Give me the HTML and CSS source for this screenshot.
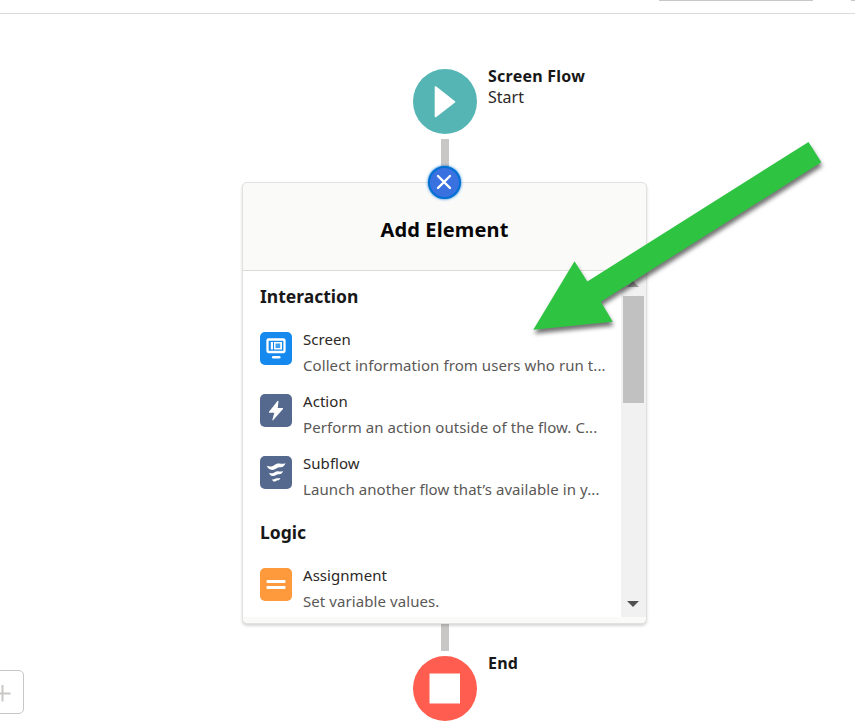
FILE: index.html
```html
<!DOCTYPE html>
<html lang="en">
<head>
  <meta charset="UTF-8">
  <title>Flow Builder</title>
  <link rel="stylesheet" href="styles.css">
</head>
<body>
<!-- Toolbar edge -->
<header class="toolbar">
  <span class="toolbar-button"></span>
  <span class="toolbar-button toolbar-button-last"></span>
</header>

<!-- Flow canvas -->
<main class="canvas">
  <div class="flow">
    <div class="node">
      <svg class="node-icon" viewBox="0 0 64 65">
        <ellipse cx="32" cy="32.5" rx="32" ry="32.5" fill="#54b5b4"/>
        <path d="M22.5 18v29.5L41.5 32.8z" fill="#fff" stroke="#fff" stroke-width="1.6" stroke-linejoin="round"/>
      </svg>
      <div class="node-text">
        <div class="node-title">Screen Flow</div>
        <div class="node-subtitle">Start</div>
      </div>
    </div>
    <div class="connector connector-start"></div>

    <section class="panel">
      <button class="close" aria-label="Close">
        <svg viewBox="0 0 16 16"><path d="M2 2l12 12M14 2L2 14" stroke="#fff" stroke-width="2.4" stroke-linecap="round"/></svg>
      </button>
      <h2 class="panel-header">Add Element</h2>
      <div class="panel-body">
        <div class="list">
          <h3 class="group">Interaction</h3>
          <div class="item">
            <svg class="item-icon screen" viewBox="0 0 32 33">
              <rect x="7.5" y="7.5" width="17" height="12.5" rx="1" fill="none" stroke="#fff" stroke-width="2.3"/>
              <path d="M10.8 10h2.2v7.500h-2.200zM14 10h8v7.500h-8z" fill="#fff"/>
              <path d="M15.500 11.500h4.700v4.500h-4.700z" fill="#1589ee" opacity=".8"/>
              <rect x="12" y="24" width="8.500" height="2.500" rx="1.200" fill="#fff"/>
            </svg>
            <div class="item-text">
              <div class="item-title">Screen</div>
              <div class="item-desc">Collect information from users who run t...</div>
            </div>
          </div>
          <div class="item">
            <svg class="item-icon action" viewBox="0 0 32 33">
              <path d="M17.500 7L9 17.800q-.5.900.5.900h4.800L12.300 26q.3.800 1 0l9.700-11q.4-1-.6-1.100h-4.700L18.500 7.400q-.3-.8-1-.4z" fill="#fff"/>
            </svg>
            <div class="item-text">
              <div class="item-title">Action</div>
              <div class="item-desc">Perform an action outside of the flow. C...</div>
            </div>
          </div>
          <div class="item">
            <svg class="item-icon subflow" viewBox="0 0 32 33">
              <path d="M6.800 9.800c3 1.200 5 .8 7.700-.9 2.500-1.700 4.500-1.600 6.500-1.200 1.700.3 3 .1 4.500-.7-.7 2.500-2.300 4.300-4.800 4.300-1.700 0-2.700.1-4.400 1.300-3.800 2.600-8.300 1.300-9.500-2.800z" fill="#fff"/>
              <path d="M9 16.900c2 .8 3.500.5 5.300-.5 1.700-1 3.200-1.200 4.700-.9 1.500.2 2.700.1 4-.5-.6 2.200-2 3.300-3.900 3.300-1.200 0-2.100.2-3.300 1-2.700 1.600-6 .6-6.800-2.400z" fill="#fff"/>
              <path d="M12 23.200c1.200.4 2 .2 3-.4s1.900-.7 2.900-.5c.9.100 1.600 0 2.400-.4-.4 1.600-1.200 2.300-2.400 2.400-.8 0-1.200.2-1.900.7-1.500 1.200-3.500.4-4-1.800z" fill="#fff"/>
            </svg>
            <div class="item-text">
              <div class="item-title">Subflow</div>
              <div class="item-desc">Launch another flow that’s available in y...</div>
            </div>
          </div>
          <h3 class="group">Logic</h3>
          <div class="item">
            <svg class="item-icon assignment" viewBox="0 0 32 33">
              <rect x="6.500" y="12" width="19" height="3" rx="1" fill="#fff"/>
              <rect x="6.500" y="18" width="19" height="3" rx="1" fill="#fff"/>
            </svg>
            <div class="item-text">
              <div class="item-title">Assignment</div>
              <div class="item-desc">Set variable values.</div>
            </div>
          </div>
        </div>
        <div class="scrollbar">
          <span class="arrow-up"></span>
          <span class="thumb"></span>
          <span class="arrow-down"></span>
        </div>
      </div>
    </section>

    <div class="connector connector-end"></div>
    <div class="node">
      <svg class="node-icon" viewBox="0 0 64 65">
        <ellipse cx="32" cy="32.5" rx="32" ry="32.5" fill="#ff5d4f"/>
        <rect x="16.5" y="17.5" width="30.5" height="30" fill="#fff"/>
      </svg>
      <div class="node-text">
        <div class="node-title">End</div>
      </div>
    </div>
  </div>

  <!-- Zoom control, cut by the left edge -->
  <button class="zoom-in" aria-label="Zoom in">
    <svg viewBox="0 0 24 44"><path d="M-6 23.500H10.500M2.500 15v16.500" stroke="#c9c7c5" stroke-width="2"/></svg>
  </button>

  <!-- Pointer arrow over the panel -->
  <svg class="pointer" viewBox="0 0 320 220">
    <path d="M13.300 199.800L54.500 131.300 67.300 151.500 288.500 12 301.300 32.300 80.800 171.800 92.800 191.800z" fill="#2ec442"/>
  </svg>
</main>
</body>
</html>
```
FILE: styles.css
```css
* {
  box-sizing: border-box;
}
body {
  margin: 0;
  height: 723px;
  overflow: hidden;
  font-family: "Noto Sans", "Open Sans", sans-serif;
  background: #fff;
  color: #181818;
}
button {
  padding: 0;
}
svg {
  display: block;
}

/* Toolbar */
.toolbar {
  height: 14px;
  padding-left: 659px;
  display: flex;
  gap: 38px;
  border-bottom: 1px solid #dddbda;
}
.toolbar-button {
  width: 154px;
  height: 1px;
  background: #c9c7c5;
}
.toolbar-button-last {
  width: 4px;
}

/* Canvas and nodes */
.canvas {
  position: relative;
  height: 709px;
  padding: 55px 0 0 242px;
  overflow: hidden;
}
.flow {
  width: 405px;
}
.node {
  display: flex;
  gap: 11px;
  padding-left: 171px;
  height: 65px;
}
.node-icon {
  width: 64px;
  height: 65px;
}
.node-text {
  font-size: 16px;
  line-height: 21px;
  margin-top: -3px;
  white-space: nowrap;
}
.node-title {
  font-weight: 700;
  letter-spacing: 0.25px;
}
.node-subtitle {
  color: #2b2826;
}
.connector {
  width: 8px;
  margin-left: 199px;
  background: #c9c7c5;
}
.connector-start {
  height: 43px;
  margin-top: 5px;
}
.connector-end {
  height: 27px;
  margin-bottom: 5px;
}

/* Add Element panel */
.panel {
  position: relative;
  height: 442px;
  border: 1px solid #e2e1e0;
  border-radius: 5px;
  background: #fafaf9;
  box-shadow: 0 2px 3px rgba(0, 0, 0, 0.16);
}
.close {
  position: absolute;
  top: -17px;
  left: 185px;
  width: 33px;
  height: 33px;
  display: flex;
  align-items: center;
  justify-content: center;
  border: 2px solid #0070d2;
  border-radius: 50%;
  background: #3a71e0;
  box-shadow: 0 0 3px #0070d2;
}
.close svg {
  width: 16px;
  height: 16px;
  margin: -1px 0 0 -1px;
}
.panel-header {
  margin: 0;
  height: 88px;
  border-bottom: 1px solid #dddbda;
  font-size: 20px;
  font-weight: 700;
  letter-spacing: 0.15px;
  line-height: 94px;
  text-align: center;
  color: #080707;
}
.panel-body {
  display: flex;
  height: 346px;
  background: #fff;
}
.list {
  flex: 1;
  padding: 2px 0 0 17px;
  overflow: hidden;
}
.group {
  margin: 0;
  height: 50px;
  font-size: 17.5px;
  font-weight: 700;
  line-height: 46px;
}
.item {
  display: flex;
  gap: 11px;
  height: 62px;
  padding-top: 3px;
  line-height: 26px;
  white-space: nowrap;
}
.item-icon {
  width: 32px;
  height: 33px;
  margin-top: 6px;
  border-radius: 5px;
}
.screen {
  background: #1589ee;
}
.action,
.subflow {
  background: #54698d;
}
.assignment {
  background: #ff9a3c;
}
.item-title {
  font-size: 15px;
  letter-spacing: 0.05px;
  color: #2b2826;
}
.item-desc {
  font-size: 15px;
  letter-spacing: 0.08px;
  color: #5a5856;
}

/* Scrollbar */
.scrollbar {
  width: 25px;
  display: flex;
  flex-direction: column;
  align-items: center;
  background: #f1f1f1;
}
.arrow-up,
.arrow-down {
  border: 6px solid transparent;
}
.arrow-up {
  margin: 10px 1px 0 0;
  border-bottom-color: #a3a3a3;
  border-top-width: 0;
}
.thumb {
  width: 21px;
  height: 107px;
  margin-top: 9px;
  background: #c1c1c1;
}
.arrow-down {
  margin: auto 1px 10px 0;
  border-top-color: #505050;
  border-bottom-width: 0;
}

/* Zoom button */
.zoom-in {
  position: absolute;
  left: -20px;
  top: 656px;
  width: 44px;
  height: 44px;
  padding-left: 19px;
  border: 1px solid #c9c7c5;
  border-radius: 5px;
  background: #fff;
}
.zoom-in svg {
  width: 24px;
  height: 44px;
  margin-top: -1px;
  overflow: visible;
}

/* Arrow overlay */
.pointer {
  position: absolute;
  left: 520px;
  top: 116px;
  width: 320px;
  height: 220px;
  filter: drop-shadow(1px 4px 2px rgba(0, 0, 0, 0.55));
}
```
